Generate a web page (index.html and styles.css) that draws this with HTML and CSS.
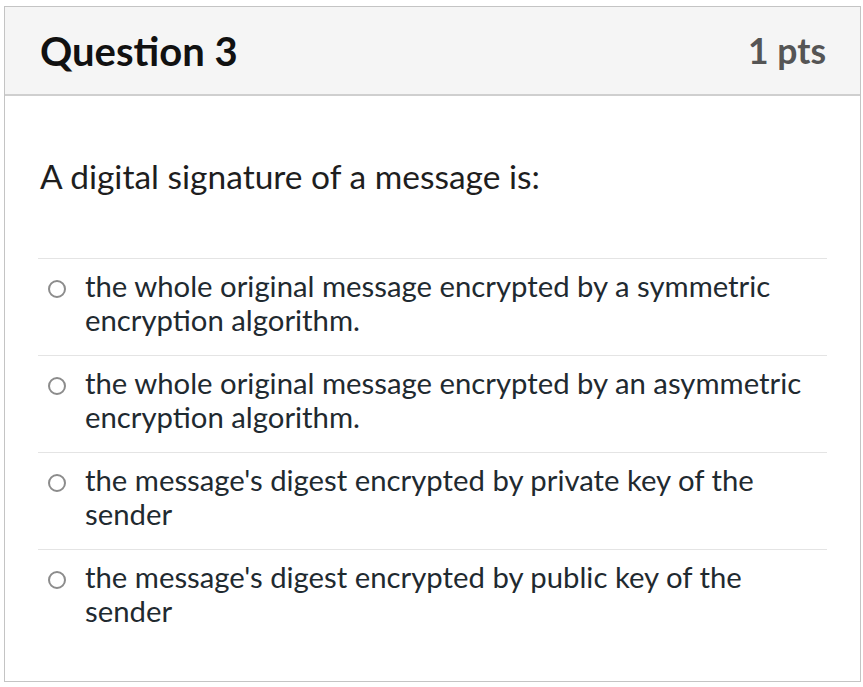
FILE: index.html
```html
<!DOCTYPE html>
<html>
<head>
<meta charset="utf-8">
<link rel="stylesheet" href="styles.css">
</head>
<body>
<div class="card">
  <div class="header">
    <h2 class="title">Question 3</h2>
    <div class="pts">1 pts</div>
  </div>
  <div class="body">
    <p class="question">A digital signature of a message is:</p>
    <div class="answers">
      <div class="answer"><span class="radio"></span><span class="label">the whole original message encrypted by a symmetric encryption algorithm.</span></div>
      <div class="answer"><span class="radio"></span><span class="label">the whole original message encrypted by an asymmetric encryption algorithm.</span></div>
      <div class="answer"><span class="radio"></span><span class="label">the message's digest encrypted by private key of the sender</span></div>
      <div class="answer"><span class="radio"></span><span class="label">the message's digest encrypted by public key of the sender</span></div>
    </div>
  </div>
</div>
</body>
</html>
```
FILE: styles.css
```css
html, body { margin: 0; padding: 0; background: #fff; }
body { padding: 6px 2px 0 4px; font-family: Lato, "Open Sans", sans-serif; color: #2d3b45; }
.card {
  border: 1px solid #c4c4c4;
  box-sizing: border-box;
  width: 857px;
  height: 676px;
}
.header {
  height: 89px;
  background: #f5f5f5;
  border-bottom: 2px solid #cfcfcf;
  box-sizing: border-box;
  display: flex;
  align-items: center;
  justify-content: space-between;
  padding: 0 34px 0 35px;
}
.title { margin: 0; font-size: 40px; font-weight: 700; color: #111; }
.pts { font-size: 35.5px; font-weight: 700; color: #555; }
.body { padding: 60px 33px 0 33px; }
.question { margin: 0 0 62px 2px; font-size: 33.5px; line-height: 40px; color: #1e1e1e; }
.answers { border-top: 1px solid #e4e4e4; }
.answer {
  display: flex;
  align-items: flex-start;
  border-bottom: 1px solid #e4e4e4;
  padding: 10px 0 14px 8px;
  min-height: 97px;
  box-sizing: border-box;
}
.answer:last-child { border-bottom: none; }
.radio {
  flex: none;
  width: 14px;
  height: 14px;
  border: 2px solid #8c8c8c;
  border-radius: 50%;
  margin: 11px 19px 0 2px;
}
.label { font-size: 29.3px; line-height: 34px; color: #1f2a30; }
```
